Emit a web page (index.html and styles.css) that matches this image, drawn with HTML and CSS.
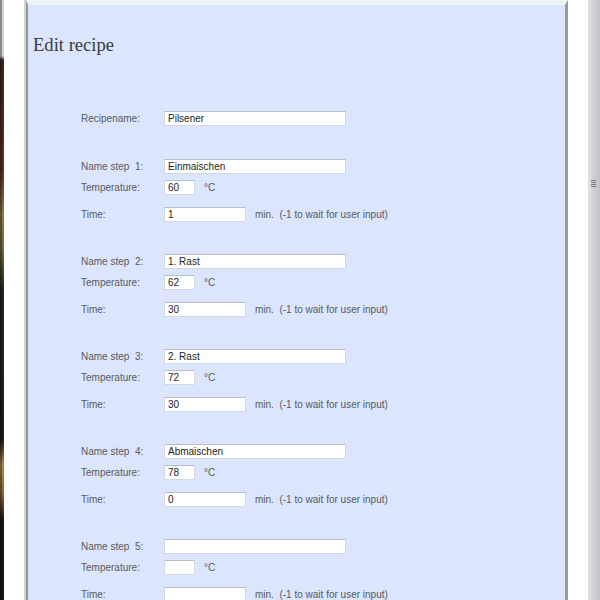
FILE: index.html
```html
<!DOCTYPE html>
<html lang="en">
<head>
    <meta charset="UTF-8">
    <meta name="viewport" content="width=device-width, initial-scale=1.0">
    <title>Edit recipe</title>
    <link rel="stylesheet" href="styles.css">
</head>
<body>
    <div class="screen">
        <div class="edge-left"></div>
        <div class="gutter gutter-left"></div>

        <!-- Main content panel -->
        <main class="panel">
            <h1>Edit recipe</h1>

            <form class="recipe-form">
                <div class="row recipe-name">
                    <label>Recipename:</label>
                    <input type="text" class="input-long" value="Pilsener">
                </div>

                <!-- Step 1 -->
                <div class="step">
                    <div class="row row-name">
                        <label>Name step&nbsp; 1:</label>
                        <input type="text" class="input-long" value="Einmaischen">
                    </div>
                    <div class="row row-temp">
                        <label>Temperature:</label>
                        <input type="text" class="input-short" value="60">
                        <span class="unit">°C</span>
                    </div>
                    <div class="row row-time">
                        <label>Time:</label>
                        <input type="text" class="input-mid" value="1">
                        <span class="unit">min.&nbsp; (-1 to wait for user input)</span>
                    </div>
                </div>

                <!-- Step 2 -->
                <div class="step">
                    <div class="row row-name">
                        <label>Name step&nbsp; 2:</label>
                        <input type="text" class="input-long" value="1. Rast">
                    </div>
                    <div class="row row-temp">
                        <label>Temperature:</label>
                        <input type="text" class="input-short" value="62">
                        <span class="unit">°C</span>
                    </div>
                    <div class="row row-time">
                        <label>Time:</label>
                        <input type="text" class="input-mid" value="30">
                        <span class="unit">min.&nbsp; (-1 to wait for user input)</span>
                    </div>
                </div>

                <!-- Step 3 -->
                <div class="step">
                    <div class="row row-name">
                        <label>Name step&nbsp; 3:</label>
                        <input type="text" class="input-long" value="2. Rast">
                    </div>
                    <div class="row row-temp">
                        <label>Temperature:</label>
                        <input type="text" class="input-short" value="72">
                        <span class="unit">°C</span>
                    </div>
                    <div class="row row-time">
                        <label>Time:</label>
                        <input type="text" class="input-mid" value="30">
                        <span class="unit">min.&nbsp; (-1 to wait for user input)</span>
                    </div>
                </div>

                <!-- Step 4 -->
                <div class="step">
                    <div class="row row-name">
                        <label>Name step&nbsp; 4:</label>
                        <input type="text" class="input-long" value="Abmaischen">
                    </div>
                    <div class="row row-temp">
                        <label>Temperature:</label>
                        <input type="text" class="input-short" value="78">
                        <span class="unit">°C</span>
                    </div>
                    <div class="row row-time">
                        <label>Time:</label>
                        <input type="text" class="input-mid" value="0">
                        <span class="unit">min.&nbsp; (-1 to wait for user input)</span>
                    </div>
                </div>

                <!-- Step 5 -->
                <div class="step">
                    <div class="row row-name">
                        <label>Name step&nbsp; 5:</label>
                        <input type="text" class="input-long" value="">
                    </div>
                    <div class="row row-temp">
                        <label>Temperature:</label>
                        <input type="text" class="input-short" value="">
                        <span class="unit">°C</span>
                    </div>
                    <div class="row row-time">
                        <label>Time:</label>
                        <input type="text" class="input-mid" value="">
                        <span class="unit">min.&nbsp; (-1 to wait for user input)</span>
                    </div>
                </div>
            </form>
        </main>

        <div class="gutter gutter-right"></div>
        <div class="scrollbar"><span class="grip"></span></div>
        <div class="edge-right"></div>
    </div>
</body>
</html>
```

FILE: styles.css
```css
body {
    margin: 0;
    height: 600px;
    overflow: hidden;
    background-color: #ffffff;
    font-family: 'Liberation Sans', Arial, sans-serif;
}

.screen {
    display: flex;
    height: 600px;
}

/* Desktop showing through at the window edges */
.edge-left {
    width: 4px;
    flex-shrink: 0;
    background:
        linear-gradient(to right, rgba(0, 0, 0, 0.35) 0, rgba(0, 0, 0, 0.35) 2px, transparent 2px),
        linear-gradient(to bottom, #d4d4d4 0, #d4d4d4 56px, #3a2822 60px, #5a2f26 170px,
            #8a7a4a 215px, #6e6a3a 250px, #2a2220 290px, #241c1a 440px,
            #b08850 465px, #8a6238 495px, #1e1816 520px, #1a1614 600px);
}

.edge-right {
    width: 5px;
    flex-shrink: 0;
    background:
        linear-gradient(to bottom, #c4c4c8 0, #c4c4c8 58px, transparent 58px),
        linear-gradient(to right, #1a1a1c 0, #111 2px, #3c3f44 2px, #474a4f 5px);
}

.gutter {
    flex-shrink: 0;
    background-color: #ffffff;
}

.gutter-left {
    width: 22px;
    box-shadow: inset -2px 0 0 #d4d4d4;
}

.gutter-right {
    width: 21px;
    box-shadow: inset -1px 0 0 #dcdcdc;
}

.scrollbar {
    width: 11px;
    flex-shrink: 0;
    position: relative;
    background: linear-gradient(to right, #e4e4e6, #cfcfd3 40%, #c4c4c8);
}

.grip {
    position: absolute;
    top: 180px;
    left: 2px;
    width: 5px;
    height: 8px;
    background: repeating-linear-gradient(to bottom, #7a7a7e 0, #7a7a7e 1px, transparent 1px, transparent 2px);
}

/* Main panel */
.panel {
    width: 532px;
    flex-shrink: 0;
    background-color: #dbe5fd;
    border-left: 2px solid #959595;
    border-right: 3px solid #9a9a9a;
    border-top: 5px solid #eef2f9;
    padding-left: 5px;
    box-sizing: content-box;
}

.panel h1 {
    margin: 29px 0 0 0;
    font-family: 'Liberation Serif', 'Times New Roman', serif;
    font-weight: normal;
    font-size: 18.6px;
    line-height: 22px;
    color: #383c44;
}

.recipe-form {
    padding: 55px 0 0 48px;
}

.row {
    display: flex;
    align-items: center;
    height: 15px;
    font-size: 10px;
    color: #585b61;
}

.row label {
    width: 83px;
    flex-shrink: 0;
}

.row input {
    height: 15px;
    box-sizing: border-box;
    margin: 0;
    padding: 0 3px;
    border: 1px solid #d3d8e2;
    border-top-color: #b8bec9;
    background-color: #ffffff;
    font-family: 'Liberation Sans', Arial, sans-serif;
    font-size: 10px;
    color: #1e1e1e;
    outline: none;
}

.input-long {
    width: 182px;
}

.input-mid {
    width: 82px;
}

.input-short {
    width: 31px;
}

.unit {
    margin-left: 9px;
    white-space: nowrap;
}

.recipe-name {
    margin-bottom: 33px;
}

.step {
    margin-bottom: 32px;
}

.row-name {
    margin-bottom: 6px;
}

.row-temp {
    margin-bottom: 12px;
}
```
